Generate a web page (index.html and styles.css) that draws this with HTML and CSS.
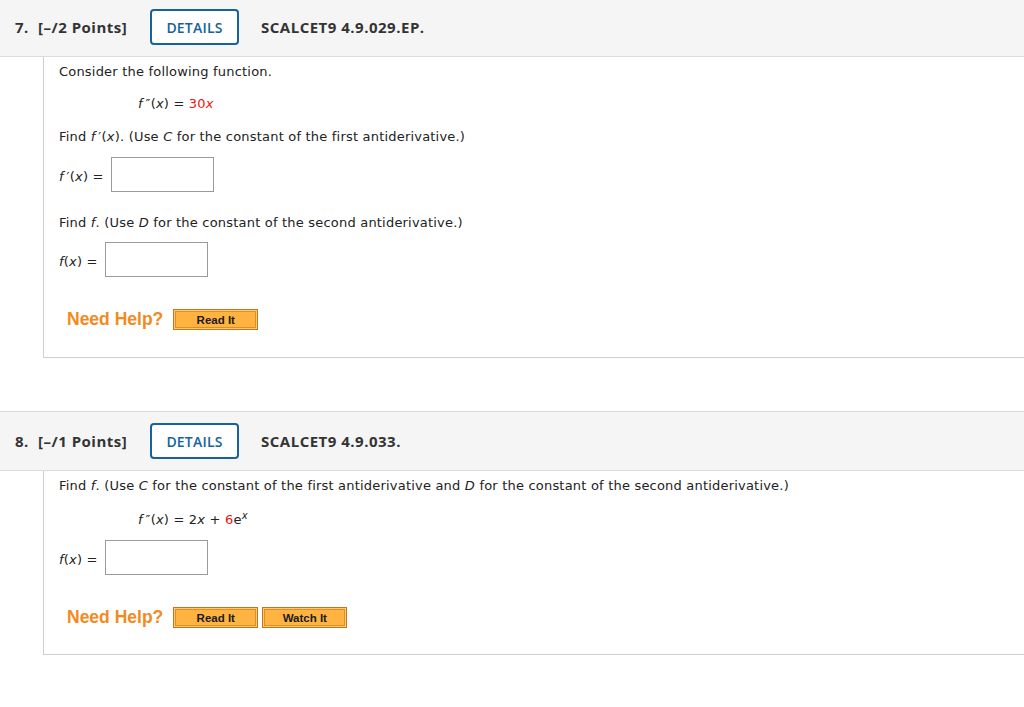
FILE: index.html
```html
<!DOCTYPE html>
<html>
<head>
<meta charset="utf-8">
<link rel="stylesheet" href="styles.css">
</head>
<body>
<div class="page">
  <section class="question">
    <div class="qhead">
      <span class="qnum">7.</span>
      <span class="qpts">[–/2 Points]</span>
      <span class="details">DETAILS</span>
      <span class="qid">SCALCET9 4.9.029.EP.</span>
    </div>
    <div class="qbody">
      <p class="line l1">Consider the following function.</p>
      <p class="math m1"><i>f</i>&thinsp;″(<i>x</i>) = <span class="red">30</span><i class="red">x</i></p>
      <p class="line l3">Find <i>f</i>&thinsp;′(<i>x</i>). (Use <i>C</i> for the constant of the first antiderivative.)</p>
      <div class="answer a1"><span class="lbl"><i>f</i>&thinsp;′(<i>x</i>) =</span><span class="box"></span></div>
      <p class="line l5">Find <i>f</i>. (Use <i>D</i> for the constant of the second antiderivative.)</p>
      <div class="answer a2"><span class="lbl"><i>f</i>(<i>x</i>) =</span><span class="box"></span></div>
      <div class="help h1"><span class="need">Need Help?</span><span class="btn">Read It</span></div>
    </div>
  </section>
  <section class="question q2">
    <div class="qhead">
      <span class="qnum">8.</span>
      <span class="qpts">[–/1 Points]</span>
      <span class="details">DETAILS</span>
      <span class="qid">SCALCET9 4.9.033.</span>
    </div>
    <div class="qbody">
      <p class="line l1">Find <i>f</i>. (Use <i>C</i> for the constant of the first antiderivative and <i>D</i> for the constant of the second antiderivative.)</p>
      <p class="math m2"><i>f</i>&thinsp;″(<i>x</i>) = 2<i>x</i> + <span class="red">6</span>e<sup><i>x</i></sup></p>
      <div class="answer a3"><span class="lbl"><i>f</i>(<i>x</i>) =</span><span class="box"></span></div>
      <div class="help h2"><span class="need">Need Help?</span><span class="btn">Read It</span><span class="btn">Watch It</span></div>
    </div>
  </section>
</div>
</body>
</html>
```
FILE: styles.css
```css
html, body { margin: 0; padding: 0; background: #fff; }
.page { margin-top: -3px; }
.question { margin-bottom: 53px; }
.qhead {
  display: flex; align-items: center;
  height: 58px;
  background: #f5f5f5;
  border-top: 1px solid #dcdcdc;
  border-bottom: 1px solid #dcdcdc;
  font-family: "Open Sans", sans-serif;
  font-weight: 700;
  font-size: 15px;
  letter-spacing: 0.5px;
  color: #333;
  padding-left: 15px;
}
.qnum { width: 23px; }
.qpts { width: 112px; }
.details {
  box-sizing: border-box;
  width: 89px; height: 36px;
  border: 2px solid #15639a;
  border-radius: 4px;
  display: flex; align-items: center; justify-content: center;
  color: #15639a;
  font-size: 14px;
  font-weight: 600;
  letter-spacing: 0.2px;
  background: #fff;
  margin-right: 22px;
}
.qbody {
  margin-left: 43px;
  border-left: 1px solid #cfcfcf;
  border-bottom: 1px solid #cfcfcf;
  padding: 7px 0 0 15px;
  font-family: "DejaVu Sans", Verdana, sans-serif;
  font-size: 13px;
  letter-spacing: 0.2px;
  color: #222;
}
.line, .math { margin: 0; line-height: 16px; }
.math { padding-left: 79px; }
.m1 { margin-top: 16px; }
.m2 { margin-top: 18px; }
.l3 { margin-top: 17px; }
.l5 { margin-top: 23px; }
.red { color: #e8140d; }
sup { font-size: 10px; line-height: 0; vertical-align: 5px; }
.answer { display: flex; align-items: center; }
.lbl { margin-right: 7px; padding-top: 3px; }
.box {
  display: block;
  width: 101px; height: 33px;
  border: 1px solid #9a9a9a;
  background: #fff;
}
.a1 { margin-top: 12px; }
.a2 { margin-top: 11px; }
.a3 { margin-top: 12px; }
.help { display: flex; align-items: center; padding-left: 8px; margin-top: 32px; margin-bottom: 27px; letter-spacing: 0; }
.h2 { margin-bottom: 26px; }
.need {
  font-family: "Liberation Sans", Arial, sans-serif;
  font-weight: bold;
  font-size: 17.5px;
  color: #f28a1e;
  margin-right: 10px;
}
.btn {
  box-sizing: border-box;
  width: 85px; height: 21px;
  margin-right: 4px;
  background: #ffb340;
  border: 1px solid #c8731a;
  box-shadow: inset 0 0 0 1px #ffcb70, inset 0 0 0 2px #e08e28;
  display: flex; align-items: center; justify-content: center;
  font-family: "Liberation Sans", Arial, sans-serif;
  font-weight: bold;
  font-size: 11.5px;
  color: #1a1a1a;
}
```
